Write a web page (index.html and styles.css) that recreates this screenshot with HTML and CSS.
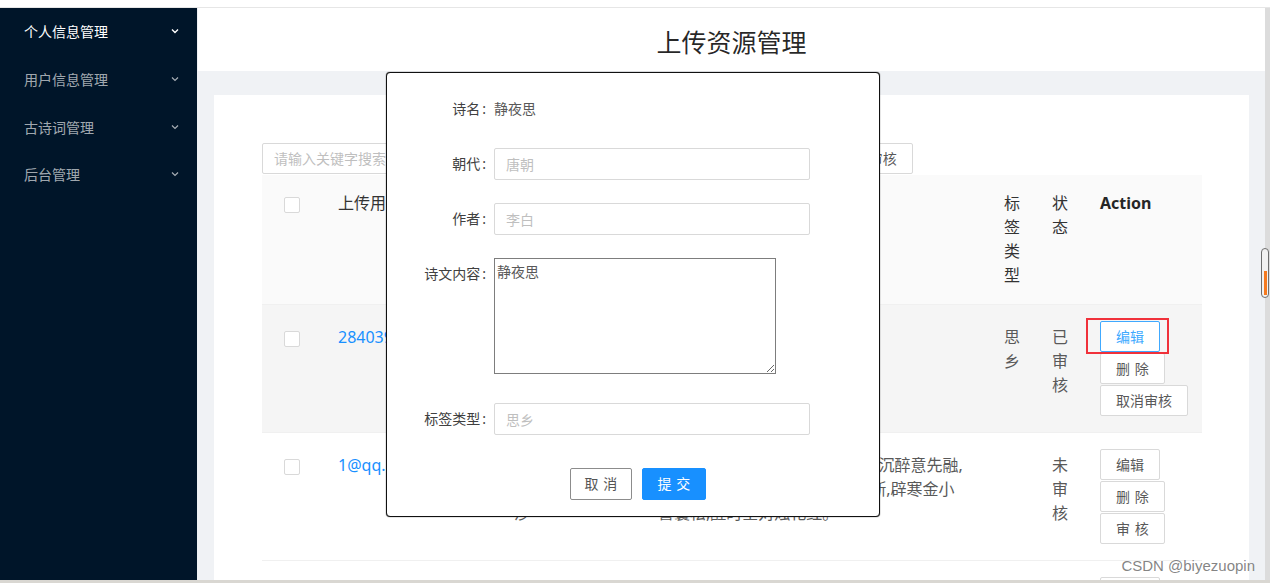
FILE: index.html
```html
<!DOCTYPE html>
<html lang="zh-CN">
<head>
  <meta charset="UTF-8">
  <meta name="viewport" content="width=device-width, initial-scale=1.0">
  <title>上传资源管理</title>
  <link rel="stylesheet" href="styles.css">
</head>
<body>
  <div class="topline"></div>
  <div class="app">
    <aside class="sider">
      <ul class="menu">
        <li class="menu-item active">
          <span>个人信息管理</span>
          <svg class="chevron" width="8" height="6" viewBox="0 0 8 6"><path d="M1 1.5 L4 4.5 L7 1.5" fill="none" stroke="currentColor" stroke-width="1.4"/></svg>
        </li>
        <li class="menu-item">
          <span>用户信息管理</span>
          <svg class="chevron" width="8" height="6" viewBox="0 0 8 6"><path d="M1 1.5 L4 4.5 L7 1.5" fill="none" stroke="currentColor" stroke-width="1.2"/></svg>
        </li>
        <li class="menu-item">
          <span>古诗词管理</span>
          <svg class="chevron" width="8" height="6" viewBox="0 0 8 6"><path d="M1 1.5 L4 4.5 L7 1.5" fill="none" stroke="currentColor" stroke-width="1.2"/></svg>
        </li>
        <li class="menu-item">
          <span>后台管理</span>
          <svg class="chevron" width="8" height="6" viewBox="0 0 8 6"><path d="M1 1.5 L4 4.5 L7 1.5" fill="none" stroke="currentColor" stroke-width="1.2"/></svg>
        </li>
      </ul>
    </aside>

    <main class="main">
      <header class="page-header">
        <h1>上传资源管理</h1>
      </header>

      <div class="content">
        <div class="card">
          <div class="toolbar">
            <input class="search-input" type="text" placeholder="请输入关键字搜索">
            <button class="btn"><span class="two-char">搜索</span></button>
            <button class="btn">批量删除</button>
            <button class="btn">批量审核</button>
          </div>

          <table class="data-table">
            <colgroup>
              <col style="width: 60px">
              <col style="width: 176px">
              <col style="width: 48px">
              <col style="width: 48px">
              <col style="width: 48px">
              <col style="width: 346px">
              <col style="width: 48px">
              <col style="width: 48px">
              <col style="width: 118px">
            </colgroup>
            <thead>
              <tr>
                <th class="check-cell"><span class="checkbox"></span></th>
                <th>上传用户</th>
                <th>诗名</th>
                <th>朝代</th>
                <th>作者</th>
                <th>诗文内容</th>
                <th>标签类型</th>
                <th>状态</th>
                <th class="action-head">Action</th>
              </tr>
            </thead>
            <tbody>
              <tr class="hover">
                <td class="check-cell"><span class="checkbox"></span></td>
                <td><a class="link">2840399912</a></td>
                <td>静夜思</td>
                <td>唐朝</td>
                <td>李白</td>
                <td class="poem">静夜思</td>
                <td>思乡</td>
                <td>已审核</td>
                <td class="action-cell">
                  <div class="actions">
                    <button class="btn btn-focus marked">编辑</button>
                    <button class="btn"><span class="two-char">删除</span></button>
                    <button class="btn">取消审核</button>
                  </div>
                </td>
              </tr>
              <tr>
                <td class="check-cell"><span class="checkbox"></span></td>
                <td><a class="link">1@qq.com</a></td>
                <td>浣溪沙</td>
                <td>宋朝</td>
                <td>易安</td>
                <td class="poem">浣溪沙 — 莫许杯深琥珀浓,未成沉醉意先融,疏钟已应晚来风,瑞脑香消魂梦断,辟寒金小髻鬟松,醒时空对烛花红。</td>
                <td></td>
                <td>未审核</td>
                <td class="action-cell">
                  <div class="actions">
                    <button class="btn">编辑</button>
                    <button class="btn"><span class="two-char">删除</span></button>
                    <button class="btn"><span class="two-char">审核</span></button>
                  </div>
                </td>
              </tr>
              <tr>
                <td class="check-cell"><span class="checkbox"></span></td>
                <td><a class="link">2@qq.com</a></td>
                <td>春晓</td>
                <td>唐朝</td>
                <td>孟浩然</td>
                <td class="poem">春眠不觉晓,处处闻啼鸟。</td>
                <td>春</td>
                <td>未审核</td>
                <td class="action-cell">
                  <div class="actions">
                    <button class="btn">编辑</button>
                    <button class="btn"><span class="two-char">删除</span></button>
                    <button class="btn"><span class="two-char">审核</span></button>
                  </div>
                </td>
              </tr>
            </tbody>
          </table>
        </div>
      </div>

      <!-- edit dialog -->
      <div class="modal">
        <div class="form-row">
          <label class="form-label">诗名</label>
          <span class="form-value">静夜思</span>
        </div>
        <div class="form-row">
          <label class="form-label">朝代</label>
          <input class="form-input" type="text" placeholder="唐朝">
        </div>
        <div class="form-row">
          <label class="form-label">作者</label>
          <input class="form-input" type="text" placeholder="李白">
        </div>
        <div class="form-row form-row-area">
          <label class="form-label">诗文内容</label>
          <textarea class="form-textarea">静夜思</textarea>
        </div>
        <div class="form-row">
          <label class="form-label">标签类型</label>
          <input class="form-input" type="text" placeholder="思乡">
        </div>
        <div class="modal-footer">
          <button class="btn btn-lg btn-cancel"><span class="two-char">取消</span></button>
          <button class="btn btn-lg btn-primary"><span class="two-char">提交</span></button>
        </div>
      </div>

      <div class="watermark">CSDN @biyezuopin</div>
    </main>

    <div class="scrollbar">
      <div class="scroll-thumb"></div>
    </div>
  </div>
  <div class="bottombar"></div>
</body>
</html>
```

FILE: styles.css
```css
* {
  box-sizing: border-box;
}
html, body {
  height: 100%;
}
body {
  margin: 0;
  overflow: hidden;
  background: #fff;
  font-family: "Noto Sans", "Noto Sans CJK SC", sans-serif;
  font-size: 14px;
  color: #333;
  display: flex;
  flex-direction: column;
}
.topline {
  height: 8px;
  flex: none;
  border-bottom: 1px solid #e6e6e6;
}
.app {
  flex: 1;
  display: flex;
  min-height: 0;
}
.bottombar {
  height: 3px;
  flex: none;
  background: #d9d7d2;
}

/* sidebar */
.sider {
  width: 198px;
  flex: none;
  background: #001529;
  border-right: 1px solid #eef0f3;
}
.menu {
  list-style: none;
  margin: -1px 0 0;
  padding: 0;
}
.menu-item {
  height: 48px;
  padding: 0 18px 0 24px;
  display: flex;
  align-items: center;
  justify-content: space-between;
  color: rgba(255, 255, 255, 0.65);
  font-size: 14px;
}
.menu-item:last-child {
  margin-top: -1px;
}
.menu-item.active {
  color: #fff;
}
.chevron {
  display: block;
}

/* main area */
.main {
  flex: 1;
  position: relative;
  overflow: hidden;
  background: #f0f2f5;
  display: flex;
  flex-direction: column;
}
.page-header {
  height: 63px;
  flex: none;
  background: #fff;
  padding-top: 17px;
}
.page-header h1 {
  margin: 0;
  font-size: 25px;
  font-weight: normal;
  line-height: 34px;
  text-align: center;
  color: rgba(0, 0, 0, 0.85);
}
.content {
  padding: 24px 16px 0;
}
.card {
  background: #fff;
  padding: 48px 47px 48px 48px;
}
.toolbar {
  display: flex;
  gap: 10px;
  height: 32px;
}
.search-input {
  width: 380px;
  height: 31px;
  border: 1px solid #d9d9d9;
  border-radius: 2px;
  padding: 4px 11px;
  font: inherit;
  font-size: 14px;
  outline: none;
}
.search-input::placeholder,
.form-input::placeholder {
  color: #bfbfbf;
}

/* buttons */
.btn {
  height: 31px;
  padding: 0 15px;
  border: 1px solid #d9d9d9;
  border-radius: 2px;
  background: #fff;
  color: #595959;
  font-family: inherit;
  font-size: 14px;
  line-height: 29px;
  cursor: pointer;
  white-space: nowrap;
}
.two-char {
  letter-spacing: 0.34em;
  margin-right: -0.34em;
}
.btn-focus {
  border-color: #40a9ff;
  color: #40a9ff;
}
.marked {
  position: relative;
}
.marked::after {
  content: "";
  position: absolute;
  left: -15px;
  right: -10px;
  top: -4px;
  bottom: -3px;
  border: 2px solid #f0313a;
}
.btn-lg {
  height: 32px;
  line-height: 30px;
}
.btn-cancel {
  border-color: #8c8c8c;
  color: #555;
}
.btn-primary {
  background: #1890ff;
  border-color: #1890ff;
  color: #fff;
}

/* table */
.data-table {
  width: 940px;
  table-layout: fixed;
  border-collapse: collapse;
  font-size: 16px;
  line-height: 24px;
}
.data-table th {
  background: #fafafa;
  padding: 16px 16px 17px;
  text-align: left;
  vertical-align: top;
  font-weight: normal;
  color: #333;
  border-bottom: 1px solid #f0f0f0;
}
.data-table th.action-head {
  font-weight: bold;
  color: #262626;
}
.data-table td {
  padding: 20px 16px 16px;
  vertical-align: top;
  color: #595959;
  border-bottom: 1px solid #f0f0f0;
  word-break: break-all;
}
.data-table tr.hover td {
  background: #f5f5f5;
}
.data-table .check-cell {
  padding-left: 0;
  padding-right: 0;
}
.checkbox {
  display: block;
  width: 16px;
  height: 16px;
  margin: 6px auto 0;
  border: 1px solid #d9d9d9;
  border-radius: 2px;
  background: #fff;
}
.data-table td.poem {
  padding-right: 22px;
}
.data-table td.action-cell {
  padding-top: 16px;
}
.actions {
  display: flex;
  flex-direction: column;
  align-items: flex-start;
  gap: 1px;
}
.link {
  color: #1890ff;
}

/* modal */
.modal {
  position: absolute;
  left: 188px;
  top: 64px;
  width: 494px;
  background: #fff;
  border: 1px solid #111;
  border-radius: 4px;
  box-shadow: 0 0 1px #000;
  padding: 20px 0 16px;
}
.form-row {
  display: flex;
  align-items: center;
  margin-bottom: 23px;
}
.form-row-area {
  align-items: flex-start;
  margin-bottom: 29px;
}
.form-label {
  width: 107px;
  flex: none;
  text-align: right;
  line-height: 32px;
  color: #404040;
}
.form-label::after {
  content: ":";
  margin: 0 8px 0 2px;
}
.form-value {
  line-height: 32px;
  color: #595959;
}
.form-input {
  width: 316px;
  height: 32px;
  border: 1px solid #d9d9d9;
  border-radius: 2px;
  padding: 4px 11px;
  font: inherit;
  font-size: 14px;
  outline: none;
}
.form-textarea {
  width: 282px;
  height: 116px;
  border: 1px solid #7d7d7d;
  padding: 2px;
  font: inherit;
  font-size: 14px;
  color: #595959;
  outline: none;
}
.modal-footer {
  display: flex;
  justify-content: center;
  gap: 10px;
  padding-left: 10px;
  margin-top: 33px;
}
.modal-footer .btn-cancel {
  width: 62px;
  padding: 0;
}
.modal-footer .btn-primary {
  width: 64px;
  padding: 0;
}

.watermark {
  position: absolute;
  right: 10px;
  bottom: 6px;
  font-family: "Liberation Sans", Arial, sans-serif;
  font-size: 15px;
  color: rgba(110, 110, 110, 0.85);
}

/* page scrollbar */
.scrollbar {
  width: 5px;
  flex: none;
  position: relative;
  background: #dcdcdc;
}
.scroll-thumb {
  position: absolute;
  left: -4px;
  top: 240px;
  width: 8px;
  height: 50px;
  border: 1.5px solid #6e6e6e;
  border-radius: 4px;
  background: #f2f2f2;
}
.scroll-thumb::after {
  content: "";
  position: absolute;
  left: 1.5px;
  right: 1.5px;
  top: 22px;
  bottom: 2px;
  background: #f57a1f;
}
```
